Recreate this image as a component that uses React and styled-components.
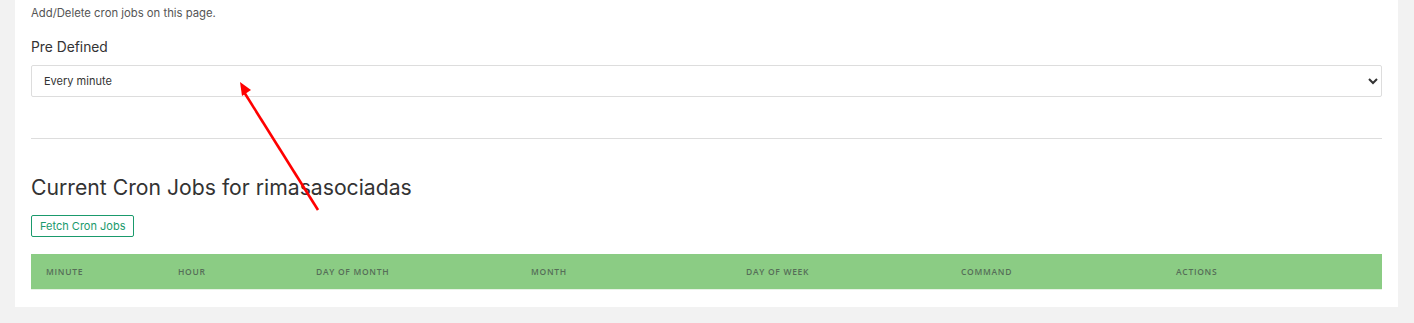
import React from 'react';
import styled, { createGlobalStyle } from 'styled-components';

const GlobalStyle = createGlobalStyle`
  body {
    margin: 0;
    background: #f2f2f2;
    font-family: Inter, "Liberation Sans", sans-serif;
  }
`;

const Card = styled.div`
  position: relative;
  margin-left: 15px;
  width: 1383px;
  box-sizing: border-box;
  background: #fff;
  padding: 5px 16px 17px 16px;
`;

const Desc = styled.p`
  margin: 0;
  font-size: 11.3px;
  line-height: 16px;
  color: #555;
`;

const Label = styled.label`
  display: block;
  margin-top: 16px;
  font-size: 13.8px;
  line-height: 20px;
  color: #333;
`;

const Select = styled.select`
  display: block;
  width: 100%;
  height: 32px;
  margin-top: 8px;
  padding: 0 8px;
  border: 1px solid #ddd;
  border-radius: 2px;
  background: #fff;
  font-family: Inter, "Liberation Sans", sans-serif;
  font-size: 11px;
  color: #333;
  outline: none;
`;

const Divider = styled.hr`
  margin: 41px 0 0 0;
  border: 0;
  border-top: 1px solid #ddd;
`;

const Heading = styled.h2`
  margin: 34px 0 0 0;
  font-size: 21.2px;
  line-height: 28px;
  font-weight: 400;
  color: #333;
`;

const Button = styled.button`
  display: block;
  margin-top: 14px;
  height: 22px;
  padding: 0 8px;
  border: 1px solid #1a9a6c;
  border-radius: 2px;
  background: #fff;
  color: #1a9a6c;
  font-family: Inter, "Liberation Sans", sans-serif;
  font-size: 11px;
`;

const Table = styled.table`
  width: 100%;
  margin-top: 17px;
  border-collapse: collapse;
  table-layout: fixed;
`;

const Th = styled.th`
  box-sizing: border-box;
  height: 35px;
  padding: 0 0 0 15px;
  background: #8bcc84;
  border-bottom: 1px solid #e6f2e4;
  text-align: left;
  font-family: "Open Sans", sans-serif;
  font-size: 8.5px;
  font-weight: 600;
  letter-spacing: 0.7px;
  text-transform: uppercase;
  color: #566e58;
  width: ${p => p.$w}px;
`;

const Overlay = styled.svg`
  position: absolute;
  left: 0;
  top: 0;
  width: 100%;
  height: 100%;
  pointer-events: none;
`;

const columns = [
  ['Minute', 132],
  ['Hour', 138],
  ['Day of Month', 215],
  ['Month', 215],
  ['Day of Week', 215],
  ['Command', 215],
  ['Actions', 221],
];

export default function App() {
  return (
    <>
      <GlobalStyle />
      <Card>
        <Desc>Add/Delete cron jobs on this page.</Desc>
        <Label htmlFor="predefined">Pre Defined</Label>
        <Select id="predefined" defaultValue="* * * * *">
          <option value="* * * * *">Every minute</option>
          <option value="*/5 * * * *">Every 5 minutes</option>
          <option value="0 * * * *">Every hour</option>
        </Select>
        <Divider />
        <Heading>Current Cron Jobs for rimasasociadas</Heading>
        <Button>Fetch Cron Jobs</Button>
        <Table>
          <thead>
            <tr>
              {columns.map(([name, w]) => (
                <Th key={name} $w={w}>{name}</Th>
              ))}
            </tr>
          </thead>
        </Table>
        <Overlay>
          <line x1="303" y1="210" x2="229" y2="92" stroke="#f00" strokeWidth="2.6" />
          <polygon points="225,82 236,90 227,96" fill="#f00" />
        </Overlay>
      </Card>
    </>
  );
}
